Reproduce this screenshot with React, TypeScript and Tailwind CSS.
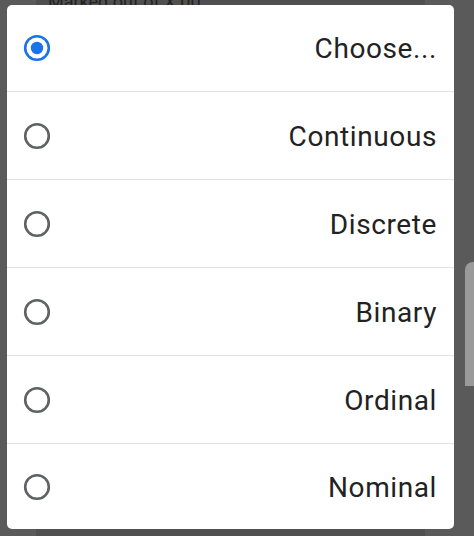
import { useState } from "react";

const options = ["Choose...", "Continuous", "Discrete", "Binary", "Ordinal", "Nominal"];

function Radio({ checked }: { checked: boolean }) {
    return (
        <svg width="28" height="28" viewBox="0 0 28 28">
            <circle
                cx="14"
                cy="14"
                r="11.8"
                fill="none"
                stroke={checked ? "#1a73e8" : "#5f6164"}
                strokeWidth="2.6"
            />
            {checked && <circle cx="14" cy="14" r="6.2" fill="#1a73e8" />}
        </svg>
    );
}

export default function App() {
    const [selected, setSelected] = useState(0);

    return (
        <div
            className="relative w-[474px] h-[536px] overflow-hidden bg-[#5a5a5a]"
            style={{ fontFamily: "Roboto, 'Noto Sans', sans-serif" }}
        >
            {/* page behind the dialog */}
            <div className="absolute left-[36px] top-0 w-[389px] h-full bg-[#505050]">
                <div className="-mt-[8px] pl-[12px] text-[18px] leading-[20px] text-[#222222]">
                    Marked out of X.00
                </div>
            </div>
            <div className="absolute right-0 top-[262px] w-[9px] h-[124px] rounded-tl-[8px] bg-[#9a9a9a]" />

            <div className="relative ml-[7px] mt-[5px] w-[447px] rounded-[5px] bg-white overflow-hidden">
                {options.map((opt, i) => (
                    <div
                        key={opt}
                        onClick={() => setSelected(i)}
                        className={
                            "flex items-center justify-between pl-[16px] pr-[17px] " +
                            (i === 0
                                ? "h-[86px]"
                                : i === options.length - 1
                                  ? "h-[86px] border-t border-[#e2e2e2]"
                                  : "h-[88px] border-t border-[#e2e2e2]")
                        }
                    >
                        <Radio checked={selected === i} />
                        <span className="pt-[2px] text-[28px] leading-none font-normal text-[#222222] tracking-[0.6px]">
                            {opt}
                        </span>
                    </div>
                ))}
            </div>
        </div>
    );
}
